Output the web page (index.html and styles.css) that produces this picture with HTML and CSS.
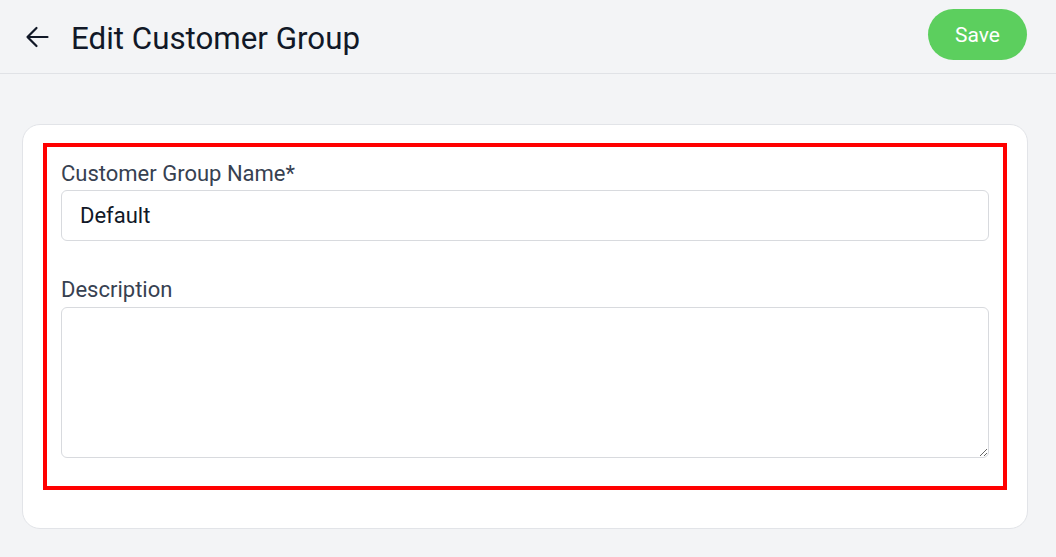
FILE: index.html
```html
<!DOCTYPE html>
<html>
<head>
<meta charset="utf-8">
<link rel="stylesheet" href="styles.css">
</head>
<body>
<header class="topbar">
  <div class="title-wrap">
    <button class="back" aria-label="Back">
      <svg width="24" height="24" viewBox="0 0 24 24" fill="none" stroke="#111827" stroke-width="2.2" stroke-linecap="round" stroke-linejoin="round"><path d="M22.5 12H2.5M11.5 3l-9 9 9 9"/></svg>
    </button>
    <h1 class="title">Edit Customer Group</h1>
  </div>
  <button class="save">Save</button>
</header>
<main class="content">
  <section class="card">
    <div class="highlight">
      <label class="label" for="name">Customer Group Name*</label>
      <input class="input" id="name" type="text" value="Default">
      <label class="label label-desc" for="desc">Description</label>
      <textarea class="textarea" id="desc"></textarea>
    </div>
  </section>
</main>
</body>
</html>
```
FILE: styles.css
```css
* { box-sizing: border-box; }
html, body { margin: 0; padding: 0; }
body {
  background: #f3f4f6;
  font-family: Roboto, "Liberation Sans", sans-serif;
  color: #111827;
  width: 1056px;
  height: 557px;
  overflow: hidden;
}
.topbar {
  height: 74px;
  border-bottom: 1px solid #e0e2e6;
  display: flex;
  align-items: center;
  justify-content: space-between;
  padding: 0 29px 0 25px;
}
.title-wrap { display: flex; align-items: center; gap: 22px; }
.back {
  border: 0; background: none; padding: 0; width: 24px; height: 24px;
  display: flex; align-items: center; justify-content: center; cursor: pointer;
  margin-top: 2px;
}
.title {
  margin: 0;
  font-size: 31.3px;
  font-weight: 400;
  color: #111827;
  line-height: 1;
  padding-top: 5px;
}
.save {
  border: 0;
  background: #5ccf5e;
  color: #fff;
  font-family: Roboto, "Liberation Sans", sans-serif;
  font-size: 21px;
  font-weight: 400;
  width: 99px;
  height: 51px;
  border-radius: 26px;
  margin-top: -4px;
  padding: 0;
}
.content { padding: 50px 28px 0 22px; }
.card {
  background: #fff;
  border: 1px solid #e2e4e8;
  border-radius: 18px;
  height: 405px;
  padding: 18px 20px 0 20px;
}
.highlight {
  border: 4px solid #ff0000;
  height: 347px;
  padding: 14px 14px 0 14px;
  display: flex;
  flex-direction: column;
}
.label {
  font-size: 22px;
  color: #374151;
  line-height: 26px;
  margin-bottom: 3px;
}
.label-desc { margin-top: 36px; margin-bottom: 4px; }
.input {
  height: 51px;
  border: 1px solid #d8dade;
  border-radius: 6px;
  padding: 0 18px;
  font-family: Roboto, "Liberation Sans", sans-serif;
  font-size: 22px;
  color: #111827;
  outline: none;
}
.textarea {
  height: 151px;
  border: 1px solid #d8dade;
  border-radius: 6px;
  padding: 12px 18px;
  font-family: Roboto, "Liberation Sans", sans-serif;
  font-size: 22px;
  resize: vertical;
  outline: none;
}
```
